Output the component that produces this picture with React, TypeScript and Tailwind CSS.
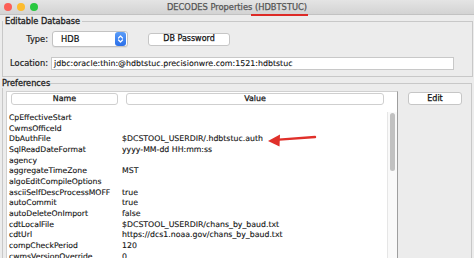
import React from 'react';

const rows: [string, string][] = [
  ['CpEffectiveStart', ''],
  ['CwmsOfficeId', ''],
  ['DbAuthFile', '$DCSTOOL_USERDIR/.hdbtstuc.auth'],
  ['SqlReadDateFormat', 'yyyy-MM-dd HH:mm:ss'],
  ['agency', ''],
  ['aggregateTimeZone', 'MST'],
  ['algoEditCompileOptions', ''],
  ['asciiSelfDescProcessMOFF', 'true'],
  ['autoCommit', 'true'],
  ['autoDeleteOnImport', 'false'],
  ['cdtLocalFile', '$DCSTOOL_USERDIR/chans_by_baud.txt'],
  ['cdtUrl', 'https://dcs1.noaa.gov/chans_by_baud.txt'],
  ['compCheckPeriod', '120'],
  ['cwmsVersionOverride', '0'],
];

function Stepper() {
  return (
    <div className="w-[11px] h-[14px] rounded-[3px] bg-gradient-to-b from-[#5a9cf8] to-[#2a6ee8] flex items-center justify-center">
      <svg width="7" height="10" viewBox="0 0 7 10" fill="none" stroke="white" strokeWidth="1.2" strokeLinecap="round" strokeLinejoin="round">
        <path d="M1.5 4 L3.5 2 L5.5 4" />
        <path d="M1.5 6 L3.5 8 L5.5 6" />
      </svg>
    </div>
  );
}

export default function App() {
  return (
    <div className="relative w-[474px] h-[258px] overflow-hidden bg-[#ececec] text-[#1c1c1c] font-['DejaVu_Sans',Verdana,sans-serif]">
      {/* title bar */}
      <div className="relative h-[15px] bg-gradient-to-b from-[#e4e4e4] to-[#d3d3d3] border-b border-[#c2c2c2] flex items-center justify-center">
        <div className="absolute left-[4px] top-[3px] flex gap-[5px]">
          <div className="w-[8px] h-[8px] rounded-full bg-[#fc5f57]" />
          <div className="w-[8px] h-[8px] rounded-full bg-[#fdbc2e]" />
          <div className="w-[8px] h-[8px] rounded-full bg-[#29c840]" />
        </div>
        <div className="mt-[1px] text-[8.3px] leading-[11px] text-[#555] [-webkit-text-stroke:0.25px_#555]">
          DECODES Properties{' '}
          <span className="relative">
            (HDBTSTUC)
            <span className="absolute left-[-4px] right-[-1px] top-[12px] h-[2px] bg-[#dd2a26]" />
          </span>
        </div>
      </div>

      {/* editable database */}
      <fieldset className="mx-[2px] mt-[1px] w-[471px] border border-[#c8c8c8] px-0 pt-[5px] pb-[6px]">
        <legend className="text-[8.2px] leading-[10px] px-[2px] text-[#222] [-webkit-text-stroke:0.3px_#222]">Editable Database</legend>
        <div className="flex items-center h-[16px]">
          <div className="w-[45px] text-right text-[8.3px] text-[#222] [-webkit-text-stroke:0.2px_#222]">Type:</div>
          <div className="ml-[4px] w-[76px] h-[16px] bg-white border border-[#c2c2c2] rounded-[3px] flex items-center justify-between pl-[8px] pr-[1px] shadow-[0_1px_0_rgba(0,0,0,0.05)]">
            <span className="text-[8.3px] text-[#111] [-webkit-text-stroke:0.2px_#111]">HDB</span>
            <Stepper />
          </div>
          <div className="ml-[20px] w-[82px] h-[13px] bg-white border border-[#c6c6c6] rounded-[3px] flex items-center justify-center text-[8px] text-[#111] [-webkit-text-stroke:0.25px_#111]">
            DB Password
          </div>
        </div>
        <div className="flex items-center h-[13px] mt-[10px]">
          <div className="w-[45px] text-right text-[8.3px] text-[#222] [-webkit-text-stroke:0.2px_#222]">Location:</div>
          <div className="ml-[3px] w-[403px] h-[13px] bg-white border border-[#c8c8c8] flex items-center pl-[2px] text-[7.9px] text-[#111] [-webkit-text-stroke:0.1px_#111]">
            jdbc:oracle:thin:@hdbtstuc.precisionwre.com:1521:hdbtstuc
          </div>
        </div>
      </fieldset>

      {/* preferences */}
      <fieldset className="mx-[2px] mt-[1px] w-[470px] h-[200px] border border-[#c8c8c8] p-0">
        <legend className="text-[8.2px] leading-[10px] px-0 ml-[-1px] text-[#222] [-webkit-text-stroke:0.3px_#222]">Preferences</legend>
        <div className="flex mt-[3px] h-full">
          <div className="ml-[3px] w-[392px] bg-white border-t border-l border-[#d0d0d0] border-r border-r-[#9e9e9e] flex flex-col">
            <div className="flex h-[20px] items-start pt-[1px]">
              <div className="w-[115px] px-[4px]">
                <div className="h-[12px] bg-white border border-[#cfcfcf] rounded-[3px] flex items-center justify-center text-[7.9px] text-[#111] [-webkit-text-stroke:0.25px_#111]">Name</div>
              </div>
              <div className="w-[266px] px-[4px]">
                <div className="h-[12px] bg-white border border-[#cfcfcf] rounded-[3px] flex items-center justify-center text-[7.9px] text-[#111] [-webkit-text-stroke:0.25px_#111]">Value</div>
              </div>
            </div>
            <div className="flex flex-1">
              <div className="w-[381px] pt-[1px]">
                {rows.map(([k, v]) => (
                  <div key={k} className="flex h-[10.67px] items-center leading-[10.67px] text-[#141414] [-webkit-text-stroke:0.12px_#141414]">
                    <div className="w-[115px] pl-[2px] whitespace-nowrap text-[7.7px]">{k}</div>
                    <div className="whitespace-nowrap text-[7.8px]">{v}</div>
                  </div>
                ))}
              </div>
              <div className="w-[10px] bg-[#f9f9f9] border-l border-[#e6e6e6] pl-[2px] pt-[1px]">
                <div className="w-[5px] h-[58px] rounded-full bg-[#c1c1c1]" />
              </div>
            </div>
          </div>
          <div className="flex-1 pl-[10px] pt-[1px]">
            <div className="w-[54px] h-[13px] bg-white border border-[#c6c6c6] rounded-[3px] flex items-center justify-center text-[8px] text-[#111] [-webkit-text-stroke:0.25px_#111]">
              Edit
            </div>
          </div>
        </div>
      </fieldset>

      {/* red annotation arrow */}
      <svg className="absolute left-[262px] top-[130px]" width="60" height="20" viewBox="262 130 60 20">
        <path d="M279 139.6 L315 137" stroke="#e0302a" strokeWidth="2.4" strokeLinecap="round" />
        <path d="M268 141 L280 134.5 L279.5 146.5 Z" fill="#e0302a" />
      </svg>
    </div>
  );
}
